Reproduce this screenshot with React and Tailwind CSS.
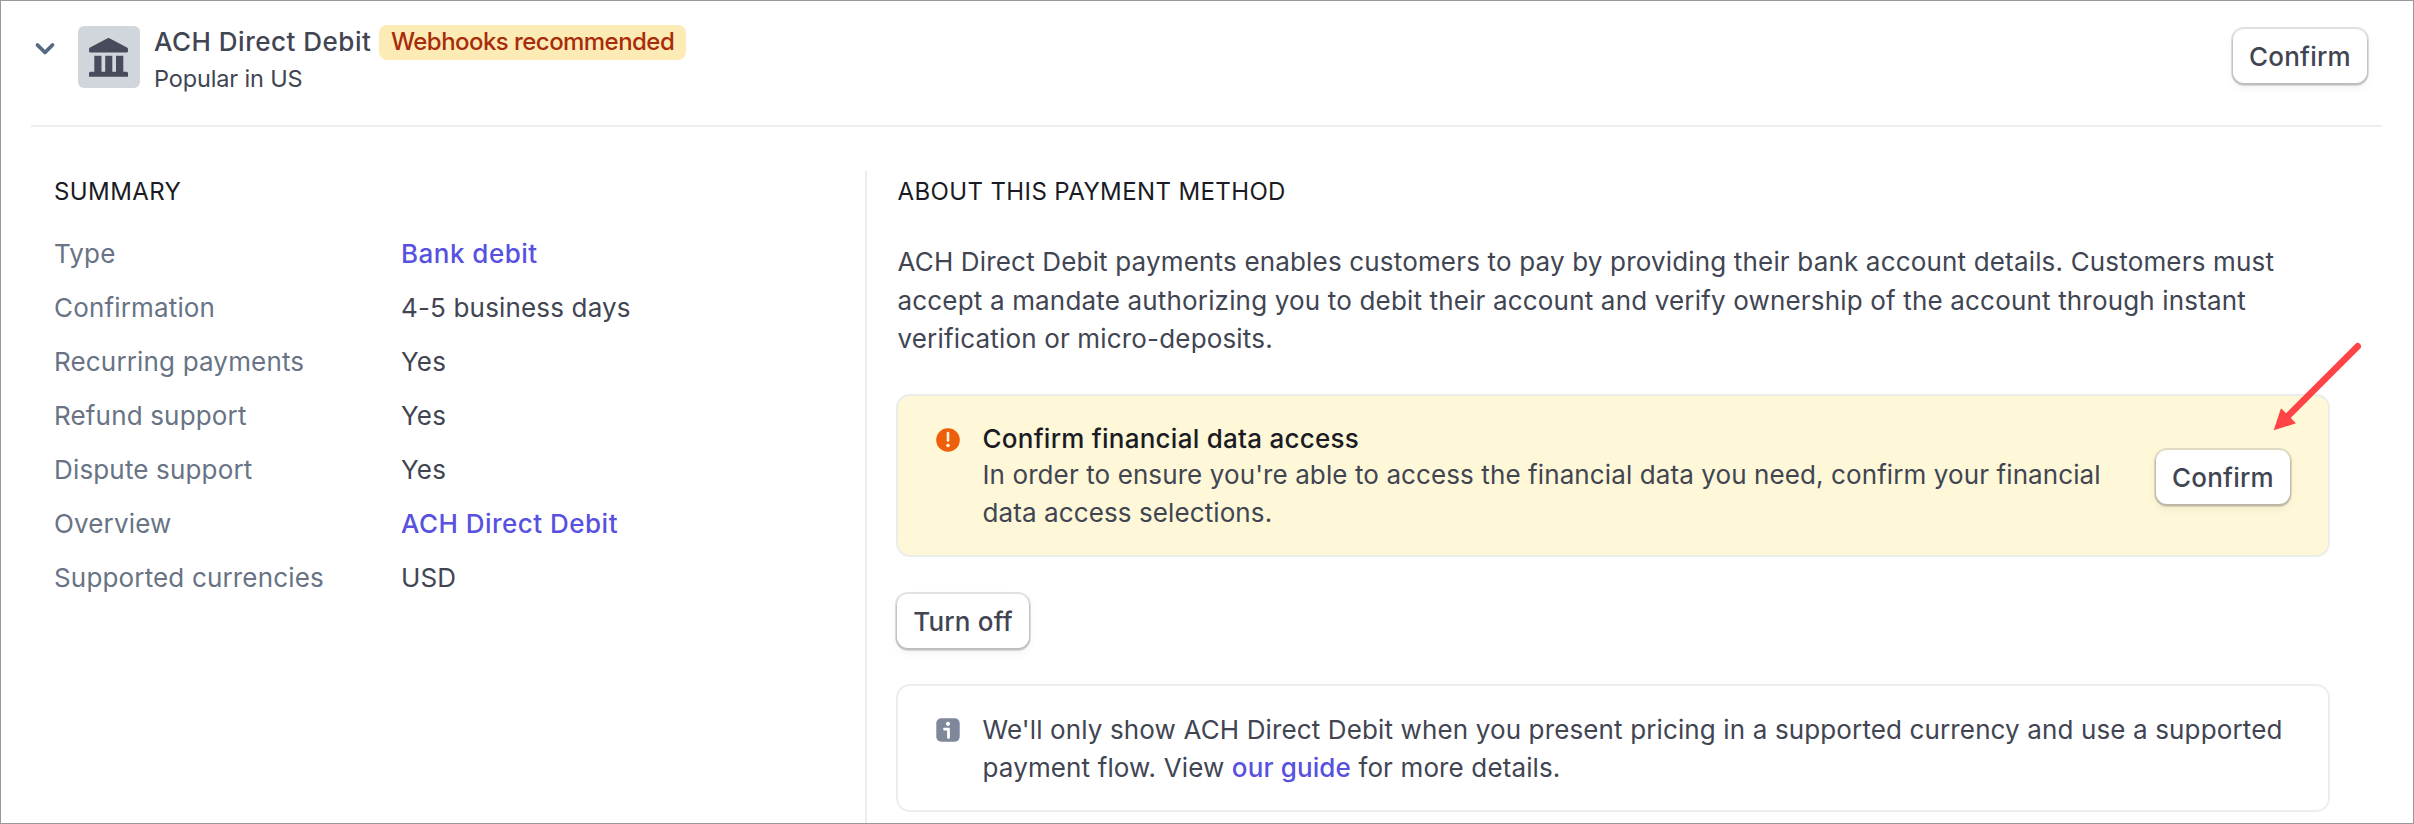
import React from "react";

// Rows of the summary column
const summary = [
    { label: "Type", value: "Bank debit", link: true },
    { label: "Confirmation", value: "4-5 business days" },
    { label: "Recurring payments", value: "Yes" },
    { label: "Refund support", value: "Yes" },
    { label: "Dispute support", value: "Yes" },
    { label: "Overview", value: "ACH Direct Debit", link: true },
    { label: "Supported currencies", value: "USD" },
];

function Button({ children, className }) {
    return (
        <button
            className={`h-[54px] shrink-0 rounded-[11px] bg-white text-[26px] leading-[56px] font-medium tracking-[0.2px] text-[#414552] whitespace-nowrap shadow-[0_0_0_2px_rgba(64,68,82,0.15),0_2px_1px_1px_rgba(0,0,0,0.13),0_4px_10px_rgba(64,68,82,0.08)] ${className}`}
        >
            {children}
        </button>
    );
}

function BankIcon() {
    return (
        <svg width="40" height="40" viewBox="0 0 40 40" fill="#474b5c">
            <path d="M18.600 1.300a2 2 0 0 1 1.800 0L38 10.600a2 2 0 0 1 1 1.700V14a1.500 1.500 0 0 1-1.500 1.500h-36A1.500 1.500 0 0 1 0 14v-1.700a2 2 0 0 1 1-1.700z" />
            <path d="M5.300 18.700h7.200V35H5.300zM16.200 18.700h7.100V35h-7.100zM27 18.700h7.300V35H27z" />
            <path d="M1.500 34.700h36A1.500 1.500 0 0 1 39 36.200V39.700H0V36.200A1.500 1.500 0 0 1 1.500 34.700z" />
        </svg>
    );
}

function AlertIcon() {
    return (
        <svg className="mt-[7px] shrink-0" width="24" height="24" viewBox="0 0 24 24">
            <circle cx="12" cy="12" r="11.800" fill="#ed5f0b" />
            <path d="M12 5v7.500" stroke="#fff6e0" strokeWidth="2.600" strokeLinecap="round" />
            <circle cx="12" cy="17.500" r="1.800" fill="#fff6e0" />
        </svg>
    );
}

function InfoIcon() {
    return (
        <svg className="mt-[7px] shrink-0" width="24" height="24" viewBox="0 0 24 24">
            <rect x="0.300" y="0.300" width="23.400" height="23.400" rx="5" fill="#7f879b" />
            <circle cx="12" cy="5.800" r="2.100" fill="#fff" />
            <path d="M8.500 11.200H12.500V19.500" fill="none" stroke="#fff" strokeWidth="2.800" strokeLinecap="round" strokeLinejoin="round" />
        </svg>
    );
}

export default function App() {
    return (
        <div className="relative flex h-[824px] w-[2414px] flex-col overflow-hidden border border-[#999999] bg-white font-['Inter',sans-serif] text-[26px] tracking-[0.16px] text-[#414552]">
            {/* Header */}
            <div className="flex h-[124px] items-start pt-[25px] pr-[46px] pl-[33px]">
                <svg className="mt-[15px] shrink-0" width="22" height="16" viewBox="0 0 22 16">
                    <path d="M3.500 4l7.500 7.500L18.500 4" fill="none" stroke="#546a83" strokeWidth="3.800" strokeLinecap="round" strokeLinejoin="round" />
                </svg>
                <div className="ml-[22px] flex h-[62px] w-[62px] shrink-0 items-center justify-center rounded-[6px] bg-[#d1d6dd]">
                    <BankIcon />
                </div>
                <div className="ml-[14px] flex-1">
                    <div className="flex items-center">
                        <span className="w-[225px] text-[26px] leading-[32px] font-medium tracking-[0.5px] whitespace-nowrap">ACH Direct Debit</span>
                        <span className="-mt-[1px] -mb-[2px] h-[35px] w-[307px] rounded-[8px] bg-[#fcebb5] pl-[12px] text-[24px] leading-[33px] font-medium tracking-[-0.550px] whitespace-nowrap text-[#a82c0a]">
                            Webhooks recommended
                        </span>
                    </div>
                    <p className="mt-[4px] text-[23.500px] leading-[34px] tracking-[-0.150px]">Popular in US</p>
                </div>
                <Button className="mt-[3px] w-[134px]">Confirm</Button>
            </div>
            <div className="mr-[31px] ml-[30px] h-[2px] shrink-0 bg-[#ebeef1]" />

            <div className="flex flex-1 pt-[44px]">
                {/* Summary */}
                <div className="w-[864px] shrink-0 pt-[5px] pl-[53px]">
                    <h2 className="text-[24px] leading-[32px] tracking-[0.4px] text-[#1a1b25]">SUMMARY</h2>
                    <div className="mt-[19px]">
                        {summary.map((row, index) => (
                            <div key={index} className="flex h-[54px] leading-[54px]">
                                <span className="w-[347px] text-[#687385]">{row.label}</span>
                                {row.link ? (
                                    <a className="font-medium tracking-[0.48px] text-[#5851df]">{row.value}</a>
                                ) : (
                                    <span>{row.value}</span>
                                )}
                            </div>
                        ))}
                    </div>
                </div>

                {/* About */}
                <div className="flex-1 border-l-2 border-[#ebeef1] pt-[5px] pr-[83px] pl-[29px]">
                    <h2 className="pl-[1.500px] text-[24px] leading-[32px] tracking-[0.38px] text-[#1a1b25]">ABOUT THIS PAYMENT METHOD</h2>
                    <p className="mt-[35px] pl-[1.500px] leading-[38.500px] tracking-[0.17px] whitespace-nowrap">
                        ACH Direct Debit payments enables customers to pay by providing their bank account details. Customers must
                        <br />
                        accept a mandate authorizing you to debit their account and verify ownership of the account through instant
                        <br />
                        verification or micro-deposits.
                    </p>

                    <div className="mt-[35px] flex h-[163px] rounded-[14px] border-2 border-[#ebeee8] bg-[#fef7d8] pt-[25px] pl-[38px]">
                        <AlertIcon />
                        <div className="ml-[22.500px] flex-1 whitespace-nowrap">
                            <p className="leading-[35px] font-medium tracking-[0.250px] text-[#1a1b25]">Confirm financial data access</p>
                            <p className="leading-[38.500px] tracking-[0.1px]">
                                In order to ensure you're able to access the financial data you need, confirm your financial
                                <br />
                                data access selections.
                            </p>
                        </div>
                        <Button className="mt-[29px] mr-[38px] w-[134px]">Confirm</Button>
                    </div>

                    <Button className="mt-[37px] ml-[1px] w-[132px]">Turn off</Button>

                    <div className="mt-[36px] flex h-[128px] rounded-[14px] border-2 border-[#ebeef1] pt-[25px] pl-[38px]">
                        <InfoIcon />
                        <p className="ml-[22.500px] leading-[38.500px] tracking-[0.13px] whitespace-nowrap">
                            We'll only show ACH Direct Debit when you present pricing in a supported currency and use a supported
                            <br />
                            payment flow. View <a className="font-medium text-[#5851df]">our guide</a> for more details.
                        </p>
                    </div>
                </div>
            </div>

            {/* Arrow pointing at the notice's button */}
            <svg className="absolute top-[339px] left-[2267px]" width="100" height="96" viewBox="2268 340 100 96">
                <path d="M2357.700 346.300L2287 417" stroke="#fe4444" strokeWidth="6.600" strokeLinecap="round" />
                <path d="M2273.700 430.300L2281 408.300L2296 423.300z" fill="#fe4444" />
            </svg>
        </div>
    );
}
